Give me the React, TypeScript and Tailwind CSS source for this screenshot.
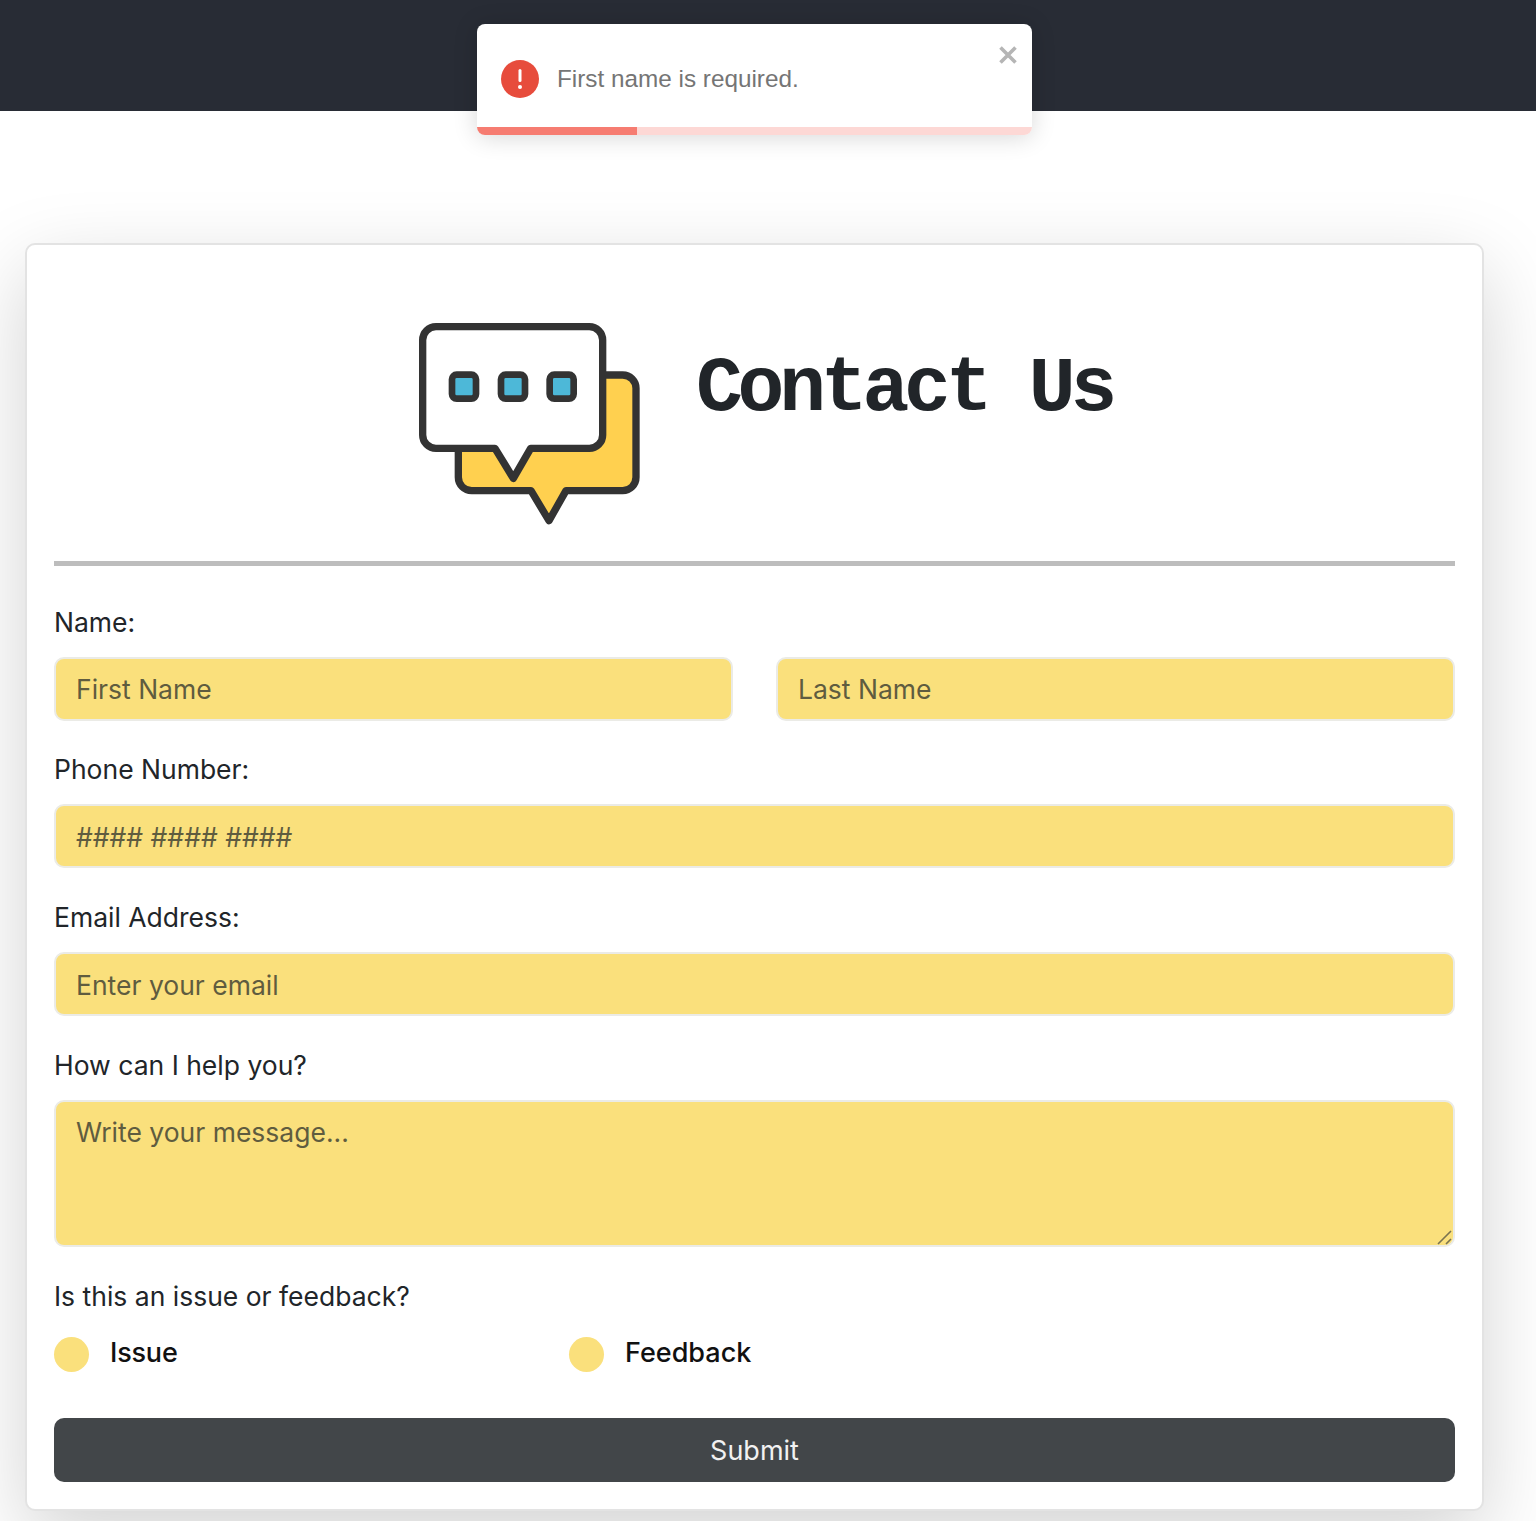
import React from "react";

const inputClass =
  "block h-[64px] w-full rounded-[10px] border-[2px] border-[#ebebe6] bg-[#fae07c] px-[20px] text-[26.5px] text-[#212529] placeholder:text-[#5f5c3f] focus:outline-none";

const labelClass = "mb-[15px] block h-[40px] text-[26.5px] leading-[40px] text-[#212529]";

const ChatIcon = () => {
  return (
    <svg width="260" height="240" viewBox="0 0 780 720" fill="none" className="shrink-0">
      <path
        d="M175 380 V532 a40 40 0 0 0 40 40 H393 L447 662 L498 572 H668 a40 40 0 0 0 40 -40 V265 a40 40 0 0 0 -40 -40 H540 V380 Z"
        fill="#ffd04f"
        stroke="#333333"
        strokeWidth="22"
        strokeLinejoin="round"
      />
      <path
        d="M108 80 H568 a40 40 0 0 1 40 40 V405 a40 40 0 0 1 -40 40 H392 L340 535 L285 445 H108 a40 40 0 0 1 -40 -40 V120 a40 40 0 0 1 40 -40 Z"
        fill="#ffffff"
        stroke="#333333"
        strokeWidth="22"
        strokeLinejoin="round"
      />
      <rect x="156" y="224" width="72" height="72" rx="14" fill="#4db8d8" stroke="#333333" strokeWidth="20" />
      <rect x="303" y="224" width="72" height="72" rx="14" fill="#4db8d8" stroke="#333333" strokeWidth="20" />
      <rect x="449" y="224" width="72" height="72" rx="14" fill="#4db8d8" stroke="#333333" strokeWidth="20" />
    </svg>
  );
};

const Toast = () => {
  return (
    <div className="absolute left-[477px] top-[24px] h-[111px] w-[555px] overflow-hidden rounded-[8px] bg-white shadow-[0_2px_24px_rgba(0,0,0,0.16)] [font-family:'Liberation_Sans',Arial,sans-serif]">
      <div className="flex h-[103px] items-center pb-[7px] pl-[24px]">
        <svg width="38" height="38" viewBox="0 0 38 38" className="mt-[14px] shrink-0">
          <circle cx="19" cy="19" r="19" fill="#e74c3c" />
          <rect x="17.5" y="9" width="3" height="13" rx="1.5" fill="#ffffff" />
          <circle cx="19" cy="27" r="2" fill="#ffffff" />
        </svg>
        <span className="ml-[18px] mt-[14px] text-[24.3px] text-[#757575]">First name is required.</span>
      </div>
      <svg width="20" height="20" viewBox="0 0 20 20" className="absolute right-[14px] top-[21px]">
        <path d="M2.5 2.5 L17.5 17.5 M17.5 2.5 L2.5 17.5" stroke="#b5b5b5" strokeWidth="3.6" fill="none" />
      </svg>
      <div className="flex h-[8px]">
        <div className="w-[160px] bg-[#f67c71]" />
        <div className="flex-1 bg-[#fdd8d5]" />
      </div>
    </div>
  );
};

export default function App() {
  return (
    <div className="relative min-h-[1521px] bg-white [font-family:Inter,'Liberation_Sans',sans-serif]">
      <div className="h-[111px] bg-[#282c35]" />
      <Toast />
      <div className="ml-[25px] mr-[52px] mt-[132px] rounded-[10px] border-[2px] border-[#e3e3e3] bg-white px-[27px] pb-[27px] pt-[27px] shadow-[0_27px_81px_rgba(0,0,0,0.175)]">
        <div className="mb-[21px] flex pl-[346px] pt-[28px]">
          <ChatIcon />
          <h1 className="ml-[36px] mt-[39px] text-[78px] font-bold leading-[100px] tracking-[-5.2px] text-[#212529] [font-family:'Liberation_Mono',monospace]">
            Contact Us
          </h1>
        </div>
        <div className="mb-[36px] h-[5px] bg-[#bdbdbd]" />

        <form>
          <label className={labelClass}>Name:</label>
          <div className="mb-[28px] grid grid-cols-2 gap-[43px]">
            <input className={inputClass} placeholder="First Name" />
            <input className={inputClass} placeholder="Last Name" />
          </div>

          <label className={labelClass}>Phone Number:</label>
          <input className={`${inputClass} mb-[29px] pt-[1px]`} placeholder="#### #### ####" />

          <label className={labelClass}>Email Address:</label>
          <input className={`${inputClass} mb-[29px] pt-[1px]`} placeholder="Enter your email" />

          <label className={labelClass}>How can I help you?</label>
          <div className="relative mb-[29px]">
            <textarea
              className="block h-[147px] w-full resize-none rounded-[10px] border-[2px] border-[#ebebe6] bg-[#fae07c] px-[20px] py-[10px] text-[26.5px] leading-[40px] text-[#212529] placeholder:text-[#5f5c3f] focus:outline-none"
              placeholder="Write your message..."
            />
            <svg width="18" height="18" viewBox="0 0 18 18" className="absolute bottom-[1px] right-[1px]">
              <path d="M2 16 L15 3 M10 16 L15 11" stroke="#7a7350" strokeWidth="1.6" fill="none" />
            </svg>
          </div>

          <label className="mb-[21px] block h-[40px] text-[26.5px] leading-[40px] text-[#212529]">
            Is this an issue or feedback?
          </label>
          <div className="mb-[46px] flex">
            <div className="flex w-[515px] items-start">
              <input type="radio" name="kind" className="h-[35px] w-[35px] appearance-none rounded-full bg-[#fae07c]" />
              <span className="ml-[21px] text-[27px] font-medium leading-[32px] tracking-[-0.2px] text-[#111111]">Issue</span>
            </div>
            <div className="flex items-start">
              <input type="radio" name="kind" className="h-[35px] w-[35px] appearance-none rounded-full bg-[#fae07c]" />
              <span className="ml-[21px] text-[27px] font-medium leading-[32px] text-[#111111]">Feedback</span>
            </div>
          </div>

          <button
            type="button"
            className="block h-[64px] w-full rounded-[10px] bg-[#424649] pt-[2px] text-[27px] text-[#f1f1f1]"
          >
            Submit
          </button>
        </form>
      </div>
    </div>
  );
}
